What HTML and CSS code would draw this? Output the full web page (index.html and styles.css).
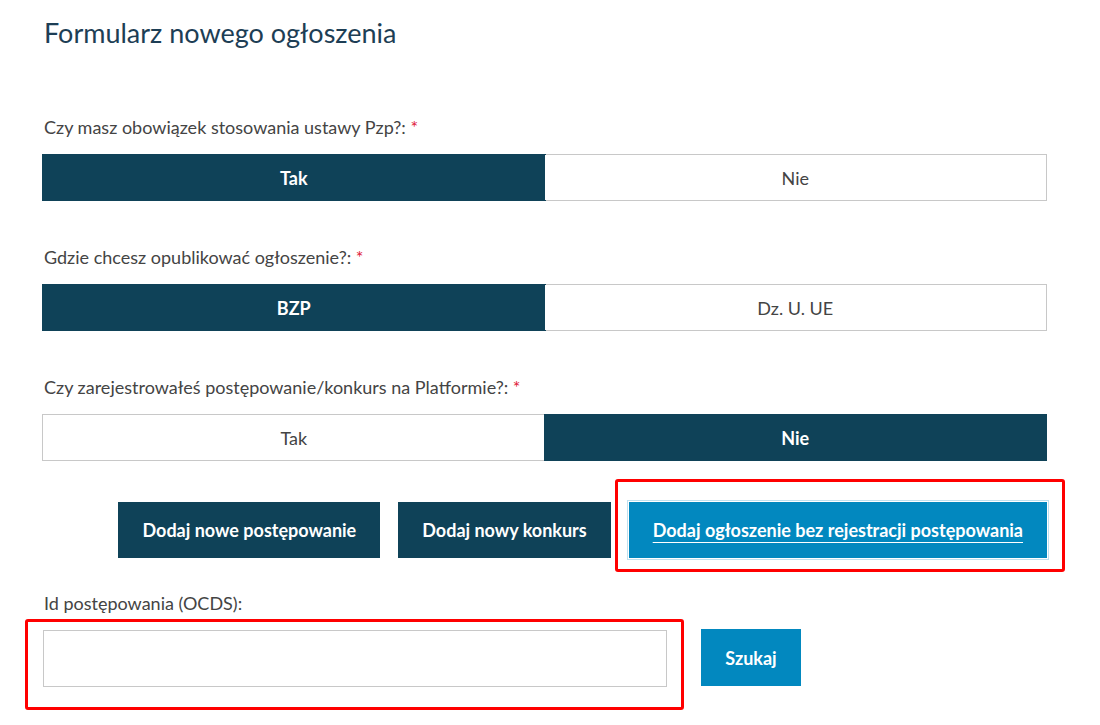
FILE: index.html
```html
<!DOCTYPE html>
<html lang="pl">
<head>
<meta charset="utf-8">
<title>Formularz nowego ogłoszenia</title>
<link rel="stylesheet" href="styles.css">
</head>
<body>
<div class="page">
  <h1 class="title">Formularz nowego ogłoszenia</h1>

  <div class="field first">
    <div class="label">Czy masz obowiązek stosowania ustawy Pzp?: <span class="req">*</span></div>
    <div class="toggle">
      <div class="opt active">Tak</div>
      <div class="opt">Nie</div>
    </div>
  </div>

  <div class="field">
    <div class="label">Gdzie chcesz opublikować ogłoszenie?: <span class="req">*</span></div>
    <div class="toggle">
      <div class="opt active">BZP</div>
      <div class="opt">Dz. U. UE</div>
    </div>
  </div>

  <div class="field">
    <div class="label">Czy zarejestrowałeś postępowanie/konkurs na Platformie?: <span class="req">*</span></div>
    <div class="toggle">
      <div class="opt">Tak</div>
      <div class="opt active">Nie</div>
    </div>
  </div>

  <div class="actions">
    <button class="btn dark">Dodaj nowe postępowanie</button>
    <button class="btn dark">Dodaj nowy konkurs</button>
    <button class="btn blue focus"><span class="ul">Dodaj ogłoszenie bez rejestracji postępowania</span></button>
  </div>

  <div class="label idlabel">Id postępowania (OCDS):</div>
  <div class="search">
    <input class="input" type="text">
    <button class="btn blue small">Szukaj</button>
  </div>

  <div class="mark mark-a"></div>
  <div class="mark mark-b"></div>
</div>
</body>
</html>
```
FILE: styles.css
```css
html, body {
  margin: 0;
  padding: 0;
  background: #fff;
}
body {
  font-family: Lato, "Open Sans", sans-serif;
  color: #444;
}
.page {
  position: relative;
  width: 1005px;
  padding: 17px 0 0 42px;
  height: 708px;
}
.title {
  margin: 0 0 0 2px;
  font-size: 27px;
  line-height: 32px;
  font-weight: 400;
  color: #1d3e55;
}
.field {
  margin-top: 45px;
}
.field.first {
  margin-top: 67px;
}
.label {
  margin-left: 2px;
  font-size: 18px;
  line-height: 22px;
  color: #444;
}
.req {
  color: #e0203a;
}
.toggle {
  margin-top: 16px;
  display: grid;
  grid-template-columns: 1fr 1fr;
  height: 47px;
  box-sizing: border-box;
  border: 1px solid #c8c8c8;
}
.opt {
  display: flex;
  align-items: center;
  justify-content: center;
  font-size: 18px;
  color: #444;
  background: #fff;
}
.opt.active {
  background: #0f4258;
  color: #fff;
  font-weight: 700;
  margin: -1px;
}
.actions {
  margin-top: 41px;
  display: flex;
  justify-content: flex-end;
  gap: 18px;
}
.btn {
  font-family: Lato, "Open Sans", sans-serif;
  font-size: 18px;
  font-weight: 700;
  color: #fff;
  border: 0;
  height: 56px;
  padding: 0 24px;
  cursor: pointer;
}
.btn.dark {
  background: #0f4258;
}
.btn.blue {
  background: #0288bf;
}
.btn.focus {
  box-shadow: 0 0 0 1px #fff, 0 0 0 2px #bfe0ef;
}
.ul {
  text-decoration: underline;
  text-underline-offset: 5px;
  text-decoration-thickness: 1px;
}
.idlabel {
  margin-top: 34px;
}
.search {
  margin-top: 16px;
  display: flex;
  align-items: flex-start;
  gap: 34px;
}
.input {
  width: 624px;
  height: 57px;
  margin: 0 0 0 1px;
  box-sizing: border-box;
  border: 1px solid #c8c8c8;
  padding: 0 12px;
  font-size: 16px;
}
.btn.small {
  width: 100px;
  height: 57px;
  padding: 0;
  margin-top: -1px;
}
.mark {
  position: absolute;
  border: 3px solid #ff0000;
  border-radius: 3px;
  box-sizing: border-box;
}
.mark-a {
  left: 615px;
  top: 479px;
  width: 450px;
  height: 93px;
}
.mark-b {
  left: 25px;
  top: 619px;
  width: 659px;
  height: 91px;
}
```
